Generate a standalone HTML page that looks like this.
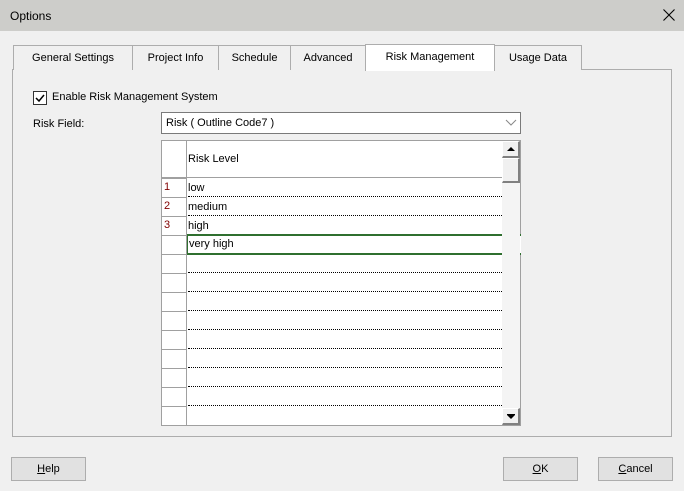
<!DOCTYPE html>
<html><head><style>
*{box-sizing:border-box;margin:0;padding:0}
body{width:684px;height:491px;background:#f0f0f0;font-family:"Liberation Sans",sans-serif;font-size:11px;color:#000;position:relative;overflow:hidden}
.a{position:absolute}
.title{left:0;top:0;width:684px;height:31px;background:#cdcdca}
.tab{top:45px;height:25px;border:1px solid #adadad;border-bottom:none;background:#f0f0f0;text-align:center;line-height:24px}
.btn{top:457px;height:24px;width:75px;border:1px solid #adadad;background:#e1e1e1;text-align:center;line-height:22px}
.rn{left:162px;width:25px;height:19px;border-top:1px solid #a0a0a0;color:#000;padding-left:2px;line-height:17px}
.rd{left:187px;width:315px;height:19px;padding-left:1px;line-height:16px}
.dl{left:188px;width:314px;height:0;border-top:1px dotted #000}
</style></head><body>
<div class="a title"></div>
<div class="a" style="left:10px;top:9px;font-size:12px">Options</div>
<svg class="a" style="left:663px;top:9px" width="12" height="12"><path d="M0.5 0.5 L11.5 11.5 M11.5 0.5 L0.5 11.5" stroke="#000" stroke-width="1.1"/></svg>
<div class="a" style="left:12px;top:69px;width:660px;height:368px;border:1px solid #adadad;background:#f0f0f0"></div>
<div class="a tab" style="left:13px;width:120px">General Settings</div>
<div class="a tab" style="left:132px;width:87px">Project Info</div>
<div class="a tab" style="left:218px;width:73px">Schedule</div>
<div class="a tab" style="left:290px;width:76px">Advanced</div>
<div class="a tab" style="left:365px;width:130px;top:44px;height:27px;background:#fff;border-color:#adadad">Risk Management</div>
<div class="a tab" style="left:494px;width:88px">Usage Data</div>
<div class="a" style="left:33px;top:91px;width:14px;height:14px;border:1px solid #333;background:#fff"></div>
<svg class="a" style="left:33px;top:91px" width="14" height="14"><path d="M3 7 L6 10 L11 4" fill="none" stroke="#000" stroke-width="1.5"/></svg>
<div class="a" style="left:52px;top:91px">Enable Risk Management System</div>
<div class="a" style="left:33px;top:118px">Risk Field:</div>
<div class="a" style="left:161px;top:112px;width:360px;height:22px;border:1px solid #7a7a7a;background:#fff;padding-left:4px;line-height:20px">Risk ( Outline Code7 )</div>
<svg class="a" style="left:505px;top:119px" width="12" height="8"><path d="M1 1 L6 6 L11 1" fill="none" stroke="#888"/></svg>
<div class="a" style="left:161px;top:140px;width:360px;height:286px;border:1px solid #a0a0a0;background:#fff"></div>
<div class="a" style="left:186px;top:141px;width:1px;height:284px;background:#a0a0a0"></div>
<div class="a" style="left:162px;top:177px;width:340px;height:1px;background:#a0a0a0"></div>
<div class="a" style="left:188px;top:153px">Risk Level</div>
<div class="a rn" style="top:178px;color:#800000">1</div><div class="a rd" style="top:180px">low</div>
<div class="a rn" style="top:197px;color:#800000">2</div><div class="a rd" style="top:199px">medium</div>
<div class="a rn" style="top:216px;color:#800000">3</div><div class="a rd" style="top:218px">high</div>
<div class="a rn" style="top:235px"></div>
<div class="a rn" style="top:254px"></div><div class="a rn" style="top:273px"></div><div class="a rn" style="top:292px"></div><div class="a rn" style="top:311px"></div><div class="a rn" style="top:330px"></div><div class="a rn" style="top:349px"></div><div class="a rn" style="top:368px"></div><div class="a rn" style="top:387px"></div><div class="a rn" style="top:406px"></div>
<div class="a dl" style="top:196px"></div><div class="a dl" style="top:215px"></div>
<div class="a dl" style="top:272px"></div><div class="a dl" style="top:291px"></div><div class="a dl" style="top:310px"></div><div class="a dl" style="top:329px"></div><div class="a dl" style="top:348px"></div><div class="a dl" style="top:367px"></div><div class="a dl" style="top:386px"></div><div class="a dl" style="top:405px"></div>
<div class="a" style="left:187px;top:234px;width:334px;height:21px;border-top:2px solid #2f6f2f;border-bottom:2px solid #2f6f2f;border-left:1px solid #2f6f2f;background:#fff;padding-left:1px;line-height:17px">very high</div>
<div class="a" style="left:502px;top:141px;width:18px;height:284px;background:#f4f4f4"></div>
<div class="a" style="left:502px;top:141px;width:18px;height:17px;background:#f0f0f0;border-right:2px solid #808080;border-bottom:2px solid #808080;border-left:1px solid #fff;border-top:1px solid #fff"></div>
<svg class="a" style="left:507px;top:147px" width="8" height="5"><path d="M0 4 L4 0 L8 4Z"/></svg>
<div class="a" style="left:502px;top:158px;width:18px;height:25px;background:#f0f0f0;border-right:2px solid #808080;border-bottom:2px solid #808080;border-left:1px solid #fff;border-top:1px solid #fff"></div>
<div class="a" style="left:502px;top:408px;width:18px;height:17px;background:#f0f0f0;border-right:2px solid #808080;border-bottom:2px solid #808080;border-left:1px solid #fff;border-top:1px solid #fff"></div>
<svg class="a" style="left:507px;top:414px" width="8" height="6"><path d="M0 0 H8 V1 L4 5 L0 1Z"/></svg>
<div class="a btn" style="left:11px"><u>H</u>elp</div>
<div class="a btn" style="left:503px"><u>O</u>K</div>
<div class="a btn" style="left:598px"><u>C</u>ancel</div>
</body></html>
